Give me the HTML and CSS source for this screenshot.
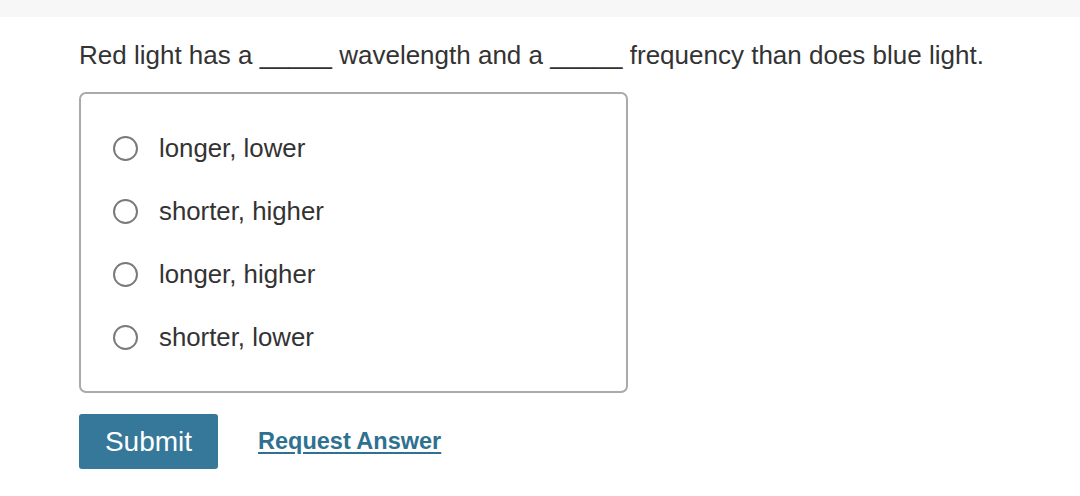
FILE: index.html
```html
<!DOCTYPE html>
<html>
<head>
<meta charset="utf-8">
<link rel="stylesheet" href="styles.css">
</head>
<body>
<div class="topbar"></div>
<main class="content">
  <p class="question">Red light has a _____ wavelength and a _____ frequency than does blue light.</p>
  <div class="choices">
    <label class="choice"><span class="radio"></span><span>longer, lower</span></label>
    <label class="choice"><span class="radio"></span><span>shorter, higher</span></label>
    <label class="choice"><span class="radio"></span><span>longer, higher</span></label>
    <label class="choice"><span class="radio"></span><span>shorter, lower</span></label>
  </div>
  <div class="actions">
    <button class="submit">Submit</button>
    <a class="request" href="#">Request Answer</a>
  </div>
</main>
</body>
</html>
```

FILE: styles.css
```css
html, body {
  margin: 0;
  padding: 0;
  background: #ffffff;
  font-family: "Liberation Sans", Arial, Helvetica, sans-serif;
  color: #333333;
}
.topbar {
  height: 17px;
  background: #f7f7f7;
}
.content {
  padding: 0 0 0 79px;
}
.question {
  margin: 0;
  padding-top: 22px;
  font-size: 26px;
  line-height: 32px;
}
.choices {
  margin-top: 21px;
  width: 549px;
  box-sizing: border-box;
  border: 2px solid #aaaaaa;
  border-radius: 7px;
  padding: 38px 0 38px 32px;
  display: flex;
  flex-direction: column;
  gap: 31px;
}
.choice {
  display: flex;
  align-items: center;
  gap: 21px;
  font-size: 25.8px;
  line-height: 32px;
  color: #333333;
}
.radio {
  width: 25px;
  height: 25px;
  box-sizing: border-box;
  border: 2px solid #7a7a7a;
  border-radius: 50%;
  flex: none;
}
.actions {
  margin-top: 21px;
  display: flex;
  align-items: center;
  gap: 40px;
}
.submit {
  width: 139px;
  height: 55px;
  background: #36789a;
  color: #ffffff;
  border: none;
  border-radius: 3px;
  font-family: inherit;
  font-size: 28px;
  line-height: 32px;
  padding: 0;
}
.request {
  color: #2f7190;
  font-weight: bold;
  font-size: 23.5px;
  text-decoration: underline;
  text-underline-offset: 3px;
}
```
